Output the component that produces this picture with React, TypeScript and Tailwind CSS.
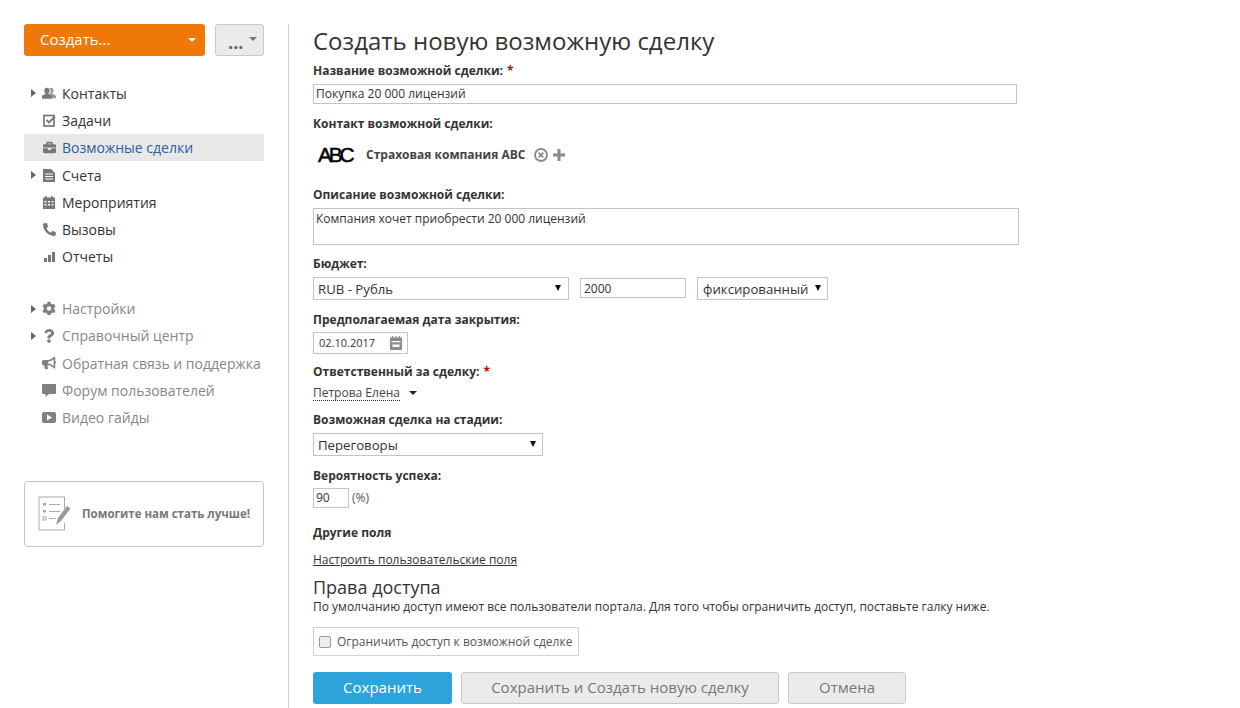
import React from "react";
import { FaBriefcase, FaPhoneAlt, FaCog, FaQuestion, FaBullhorn } from "react-icons/fa";

const font = { fontFamily: '"Open Sans", "Noto Sans", sans-serif' };

function Arrow() {
  return <svg width="5" height="8" viewBox="0 0 5 8" className="block"><path d="M0 0l5 4-5 4z" fill="#666" /></svg>;
}
function Users() {
  return (
    <svg width="16" height="14" viewBox="0 0 16 14">
      <path d="M10 1c2.400 0 3.400 1.700 3.200 3.600-.1 1-.6 2-1.200 2.600-.2.500 0 1 .6 1.300 1.300.5 3 1 3.400 2v2.500h-4c0-2-1-3-3-3.700-.5-.3-.4-1-.1-1.500.6-.8 1-1.700 1-2.800 0-1.500-.6-2.700-1.500-3.300C8.800 1.200 9.400 1 10 1z" fill="#999" />
      <path d="M5.500 1c2.300 0 3.400 1.700 3.200 3.600-.1 1-.6 2-1.200 2.600-.2.500 0 1 .6 1.300 1.300.6 3 1.100 3.400 2.200V13.500H0v-2.800c.3-1 2-1.600 3.300-2.200.7-.3.8-.8.6-1.300-.6-.6-1.100-1.600-1.200-2.600C2.500 2.700 3.200 1 5.500 1z" fill="#777" />
    </svg>
  );
}
function Tasks() {
  return (
    <svg width="13" height="13" viewBox="0 0 13 13">
      <rect x="1" y="1.500" width="10" height="10.500" fill="none" stroke="#777" strokeWidth="1.700" />
      <path d="M3.500 6l2.400 2.400L12 2.500" fill="none" stroke="#777" strokeWidth="1.900" />
    </svg>
  );
}
function Doc() {
  return (
    <svg width="12" height="13" viewBox="0 0 12 13">
      <path d="M0 0h8l4 4v9H0z" fill="#777" />
      <path d="M2 5h8M2 7.500h8M2 10h8" stroke="#fff" strokeWidth="1" />
    </svg>
  );
}
function Calendar() {
  return (
    <svg width="12" height="13" viewBox="0 0 12 13">
      <path d="M0 1.500h12V13H0z" fill="#777" />
      <path d="M3 0v2M9 0v2" stroke="#777" strokeWidth="1.500" />
      <path d="M1.500 5h2v1.500h-2zM5 5h2v1.500H5zM8.500 5h2v1.500h-2zM1.500 8h2v1.500h-2zM5 8h2v1.500H5zM8.500 8h2v1.500h-2z" fill="#fff" />
    </svg>
  );
}
function Bars() {
  return (
    <svg width="11" height="10" viewBox="0 0 11 10">
      <rect x="0" y="6" width="3" height="4" fill="#777" />
      <rect x="4" y="3" width="3" height="7" fill="#777" />
      <rect x="8" y="0" width="3" height="10" fill="#777" />
    </svg>
  );
}
function Comment() {
  return (
    <svg width="14" height="13" viewBox="0 0 14 13">
      <path d="M1 0h12a1 1 0 0 1 1 1v8a1 1 0 0 1-1 1H7l-3.500 3v-3H1a1 1 0 0 1-1-1V1a1 1 0 0 1 1-1z" fill="#808080" />
    </svg>
  );
}
function Video() {
  return (
    <svg width="14" height="11" viewBox="0 0 14 11">
      <rect width="14" height="11" rx="2" fill="#808080" />
      <path d="M5 2.500l5 3-5 3z" fill="#fff" />
    </svg>
  );
}
function DateIcon() {
  return (
    <svg width="12" height="14" viewBox="0 0 12 14">
      <path d="M0 1.500h12V14H0z" fill="#8c8c8c" />
      <path d="M2.500 0v3M6 0v3M9.500 0v3" stroke="#8c8c8c" strokeWidth="1.200" />
      <path d="M1.500 5h9v1.200h-9zM2.500 8.500h7v2.500h-7z" fill="#fff" />
    </svg>
  );
}
function RemoveIcon() {
  return (
    <svg width="14" height="14" viewBox="0 0 14 14" fill="none">
      <circle cx="7" cy="7" r="6" stroke="#8a8a8a" strokeWidth="1.800" />
      <path d="M4.700 4.700l4.600 4.600M9.300 4.700l-4.600 4.600" stroke="#8a8a8a" strokeWidth="1.800" />
    </svg>
  );
}
function AddIcon() {
  return (
    <svg width="12" height="12" viewBox="0 0 12 12">
      <path d="M4.500 0h3v4.500H12v3H7.500V12h-3V7.500H0v-3h4.500z" fill="#8a8a8a" />
    </svg>
  );
}
function Survey() {
  return (
    <svg width="33" height="35" viewBox="0 0 33 35" fill="none">
      <path d="M26.500 13V1H1v33h25.500v-7" stroke="#aaa" />
      <rect x="5" y="7" width="3" height="2.500" fill="#aaa" />
      <rect x="5" y="14" width="3" height="2.500" fill="#aaa" />
      <rect x="5" y="21" width="3" height="3" stroke="#aaa" />
      <path d="M11 8.500h11M11 15.500h11M11 22.500h7" stroke="#aaa" />
      <path d="M18 29l2-7 9-12 3.500 2.500-9 12z" fill="#999" />
    </svg>
  );
}

type NavItem = { label: string; icon: React.ReactNode; arrow?: boolean; active?: boolean };

const mainNav: NavItem[] = [
  { label: "Контакты", icon: <Users />, arrow: true },
  { label: "Задачи", icon: <Tasks /> },
  { label: "Возможные сделки", icon: <FaBriefcase size={13} color="#777" />, active: true },
  { label: "Счета", icon: <Doc />, arrow: true },
  { label: "Мероприятия", icon: <Calendar /> },
  { label: "Вызовы", icon: <FaPhoneAlt size={13} color="#777" /> },
  { label: "Отчеты", icon: <Bars /> },
];
const helpNav: NavItem[] = [
  { label: "Настройки", icon: <FaCog size={15} color="#808080" />, arrow: true },
  { label: "Справочный центр", icon: <FaQuestion size={14} color="#808080" />, arrow: true },
  { label: "Обратная связь и поддержка", icon: <FaBullhorn size={14} color="#808080" /> },
  { label: "Форум пользователей", icon: <Comment /> },
  { label: "Видео гайды", icon: <Video /> },
];

function NavRow({ item, muted }: { item: NavItem; muted?: boolean }) {
  return (
    <div className={`flex h-[27.2px] items-center text-[14px] ${item.active ? "bg-[#e8e8e8] text-[#2a5f9e]" : muted ? "text-[#83888d]" : "text-[#333]"}`}>
      <span className="flex w-[18px] shrink-0 justify-end pr-[6px]">{item.arrow && <Arrow />}</span>
      <span className="flex w-[14px] shrink-0 justify-center">{item.icon}</span>
      <span className="ml-[6px] whitespace-nowrap">{item.label}</span>
    </div>
  );
}

function Label({ children, required, className = "" }: { children: React.ReactNode; required?: boolean; className?: string }) {
  return (
    <div className={`flex h-[18px] items-center text-[12px] leading-[18px] font-bold text-[#333] ${className}`}>
      <span>{children}</span>
      {required && <span className="ml-[4px] text-[#cc0000]">*</span>}
    </div>
  );
}

function Field({ className = "", children }: { className?: string; children: React.ReactNode }) {
  return <div className={`flex items-center border border-[#c4c4c4] bg-white text-[#333] ${className}`}>{children}</div>;
}

function Triangle() {
  return <svg width="6" height="6" viewBox="0 0 6 6" className="mb-[4px] block"><path d="M0 0h6L3 6z" fill="#111" /></svg>;
}

export default function App() {
  return (
    <div style={font} className="flex h-[708px] w-[1240px] overflow-hidden bg-white text-[#333]">
      <aside className="ml-[24px] w-[240px] shrink-0 pt-[24px]">
        <div className="flex gap-[10px]">
          <div className="flex h-[32px] w-[181px] items-center justify-between rounded-[3px] bg-[#f07808] pr-[9px] pl-[16px] text-[15px] text-white">
            <span className="mb-[2px]">Создать...</span>
            <svg width="8" height="4" viewBox="0 0 8 4"><path d="M0 0h8L4 4z" fill="#fff" /></svg>
          </div>
          <div className="flex h-[32px] w-[49px] items-center justify-between rounded-[3px] border border-[#c9c9c9] bg-[#ebebeb] pr-[6px] pl-[12px] text-[18px] font-bold text-[#666]">
            <span className="mt-[3px] leading-none">...</span>
            <svg width="8" height="4" viewBox="0 0 8 4" className="mb-[2px]"><path d="M0 0h8L4 4z" fill="#777" /></svg>
          </div>
        </div>
        <nav className="mt-[23.9px]">
          {mainNav.map((i) => <NavRow key={i.label} item={i} />)}
        </nav>
        <nav className="mt-[25px]">
          {helpNav.map((i) => <NavRow key={i.label} item={i} muted />)}
        </nav>
        <div className="mt-[49.5px] flex h-[66px] items-center rounded-[4px] border border-[#c4c4c4] pl-[13px]">
          <Survey />
          <span className="ml-[11px] text-[11.5px] font-bold whitespace-nowrap text-[#777]">Помогите нам стать лучше!</span>
        </div>
      </aside>

      <div className="mt-[24px] ml-[24px] h-[684px] w-px shrink-0 bg-[#d0d0d0]" />

      <main className="ml-[24px] w-[800px] pt-[24px] text-[12px]">
        <h1 className="h-[38px] text-[24px] leading-[34px] font-normal whitespace-nowrap text-[#333]">Создать новую возможную сделку</h1>
        <Label required>Название возможной сделки:</Label>
        <Field className="mt-[4px] h-[20px] w-[704px] pl-[2px]">Покупка 20 000 лицензий</Field>
        <Label className="mt-[11px]">Контакт возможной сделки:</Label>
        <div className="mb-[9px] flex h-[44px] items-center">
          <span style={{ fontFamily: '"Liberation Sans", sans-serif' }} className="ml-[5px] w-[48px] text-[21px] font-normal tracking-[-3.2px] text-black [-webkit-text-stroke:0.5px_black]">ABC</span>
          <span className="text-[12px] font-bold text-[#444]">Страховая компания ABC</span>
          <span className="ml-[9px] flex"><RemoveIcon /></span>
          <span className="ml-[5px] flex"><AddIcon /></span>
        </div>
        <Label>Описание возможной сделки:</Label>
        <Field className="mt-[4px] h-[37px] w-[706px] items-start pt-[1px] pl-[2px]">Компания хочет приобрести 20 000 лицензий</Field>
        <Label className="mt-[10px]">Бюджет:</Label>
        <div className="mt-[4px] flex h-[23px] items-start">
          <Field className="h-[23px] w-[256px] justify-between pt-[2px] pr-[7px] pl-[4px] text-[13.2px]">RUB - Рубль<Triangle /></Field>
          <Field className="mt-[1px] ml-[11px] h-[20px] w-[106px] pt-[2px] pl-[3px]">2000</Field>
          <Field className="ml-[11px] h-[23px] w-[131px] justify-between pt-[2px] pr-[6px] pl-[5px] text-[13.2px]">фиксированный<Triangle /></Field>
        </div>
        <Label className="mt-[10px] pt-[2px]">Предполагаемая дата закрытия:</Label>
        <Field className="mt-[4px] h-[22px] w-[95px] justify-between pr-[5px] pl-[5px] text-[11px]">
          <span className="mt-[1px]">02.10.2017</span>
          <DateIcon />
        </Field>
        <Label required className="mt-[8px] pt-[2px]">Ответственный за сделку:</Label>
        <div className="mt-[2px] flex h-[22px] items-center">
          <span className="border-b border-dotted border-[#333] text-[12px] leading-[15px] text-[#444]">Петрова Елена</span>
          <svg width="8" height="4" viewBox="0 0 8 4" className="ml-[9px]"><path d="M0 0h8L4 4z" fill="#222" /></svg>
        </div>
        <Label className="mt-[7px]">Возможная сделка на стадии:</Label>
        <Field className="mt-[4px] h-[23px] w-[230px] justify-between pt-[2px] pr-[6px] pl-[4px] text-[13.2px]">Переговоры<Triangle /></Field>
        <Label className="mt-[10px] pt-[2px]">Вероятность успеха:</Label>
        <div className="mt-[4px] flex h-[20px] items-center">
          <Field className="h-[20px] w-[36px] pl-[2px] text-[12px]">90</Field>
          <span className="ml-[3px] text-[12px] text-[#555]">(%)</span>
        </div>
        <Label className="mt-[16px]">Другие поля</Label>
        <a className="mt-[9px] block h-[18px] text-[12px] leading-[18px] text-[#333] underline">Настроить пользовательские поля</a>
        <h2 className="mt-[7px] h-[22px] text-[18px] leading-[22px] font-normal text-[#333]">Права доступа</h2>
        <p className="h-[18px] text-[12px] leading-[18px] whitespace-nowrap text-[#333]">По умолчанию доступ имеют все пользователи портала. Для того чтобы ограничить доступ, поставьте галку ниже.</p>
        <div className="mt-[11px] flex h-[29px] w-[266px] items-center border border-[#c5d5e2] pl-[5px]">
          <span className="h-[12px] w-[12px] rounded-[2px] border border-[#999] bg-[#eeeeee]" />
          <span className="ml-[6px] text-[12px] whitespace-nowrap text-[#555]">Ограничить доступ к возможной сделке</span>
        </div>
        <div className="mt-[16px] flex gap-[9px] text-[15px]">
          <div className="flex h-[32px] w-[139px] items-center justify-center rounded-[3px] bg-[#2da5dc] pb-[1px] text-white">Сохранить</div>
          <div className="flex h-[32px] w-[318px] items-center justify-center rounded-[3px] border border-[#c9c9c9] bg-[#ebebeb] pb-[1px] text-[#777]">Сохранить и Создать новую сделку</div>
          <div className="flex h-[32px] w-[118px] items-center justify-center rounded-[3px] border border-[#c9c9c9] bg-[#ebebeb] pb-[1px] text-[#777]">Отмена</div>
        </div>
      </main>
    </div>
  );
}
